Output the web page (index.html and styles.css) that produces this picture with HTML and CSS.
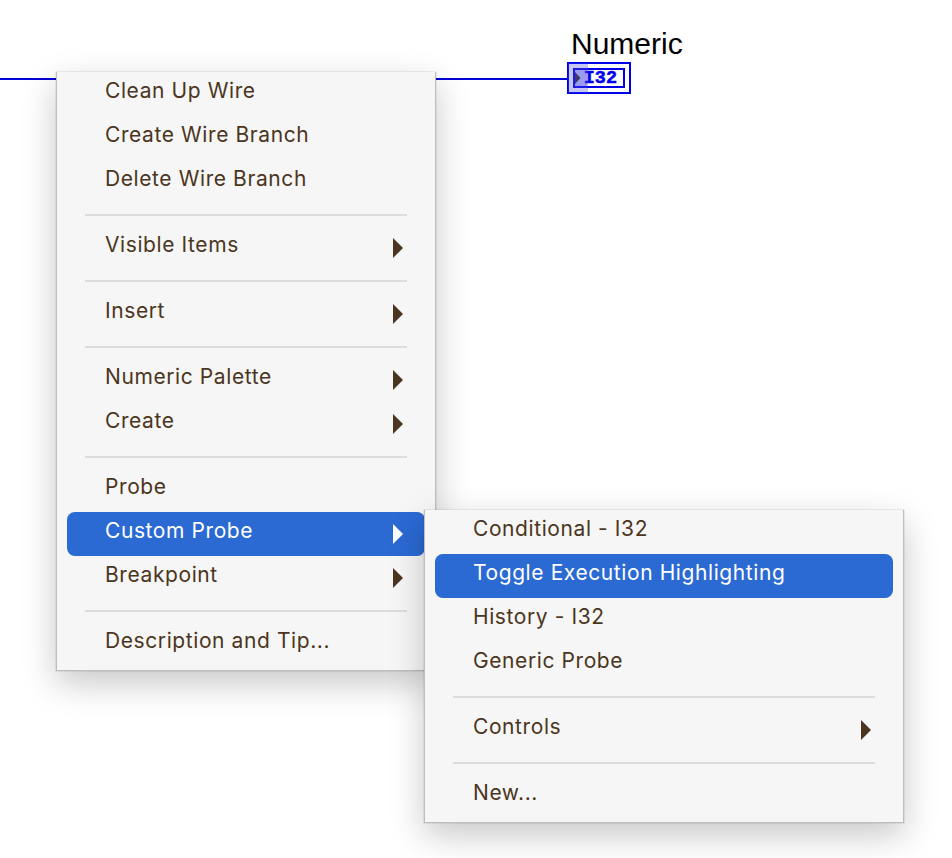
FILE: index.html
```html
<!DOCTYPE html>
<html lang="en">
<head>
<meta charset="utf-8">
<title>Wire context menu</title>
<link rel="stylesheet" href="styles.css">
</head>
<body>
<div class="canvas">
  <div class="wire"></div>
  <div class="label">Numeric</div>
  <div class="terminal">
    <div class="terminal-inner"><span class="terminal-text">I32</span></div>
    <div class="terminal-overlay"></div>
    <div class="terminal-dark"></div>
    <svg class="terminal-arrow" width="6" height="12" viewBox="0 0 6 12"><path d="M0 0 L5.5 6 L0 12 Z" fill="#3f3a66"/></svg>
  </div>

  <div class="menu menu-main">
    <div class="item"><span>Clean Up Wire</span></div>
    <div class="item"><span>Create Wire Branch</span></div>
    <div class="item"><span>Delete Wire Branch</span></div>
    <div class="sep"></div>
    <div class="item"><span>Visible Items</span><i class="arrow"></i></div>
    <div class="sep"></div>
    <div class="item"><span>Insert</span><i class="arrow"></i></div>
    <div class="sep"></div>
    <div class="item"><span>Numeric Palette</span><i class="arrow"></i></div>
    <div class="item"><span>Create</span><i class="arrow"></i></div>
    <div class="sep"></div>
    <div class="item"><span>Probe</span></div>
    <div class="item active"><span>Custom Probe</span><i class="arrow"></i></div>
    <div class="item"><span>Breakpoint</span><i class="arrow"></i></div>
    <div class="sep"></div>
    <div class="item"><span>Description and Tip...</span></div>
  </div>

  <div class="menu menu-sub">
    <div class="item"><span>Conditional - I32</span></div>
    <div class="item active"><span>Toggle Execution Highlighting</span></div>
    <div class="item"><span>History - I32</span></div>
    <div class="item"><span>Generic Probe</span></div>
    <div class="sep"></div>
    <div class="item"><span>Controls</span><i class="arrow"></i></div>
    <div class="sep"></div>
    <div class="item"><span>New...</span></div>
  </div>
</div>
</body>
</html>
```
FILE: styles.css
```css
* { box-sizing: border-box; }
html, body { margin: 0; padding: 0; background: #fff; }
.canvas { position: relative; width: 952px; height: 858px; overflow: hidden; background: #fff; }

.wire { position: absolute; left: 0; top: 78px; width: 568px; height: 2px; background: #0000d8; }
.label {
  position: absolute; left: 571px; top: 27px;
  font: 30px/34px "Liberation Sans", Arial, sans-serif; color: #000;
}
.terminal {
  position: absolute; left: 567px; top: 62px; width: 64px; height: 32px;
  border: 2px solid #0000e6; background: #fff;
}
.terminal-inner {
  position: absolute; left: 4px; top: 4px; width: 52px; height: 20px;
  border: 2px solid #0000e6; display: flex; align-items: center; justify-content: flex-end; padding: 1px 6px 0 0;
}
.terminal-text {
  font: bold 18.5px/16px "Liberation Mono", "Courier New", monospace;
  color: #0000f0; -webkit-text-stroke: .5px #0000f0;
}
.terminal-overlay { position: absolute; left: -1px; top: -1px; width: 20px; height: 30px; background: rgba(70, 70, 230, .3); }
.terminal-dark { position: absolute; left: 4px; top: 4px; width: 14px; height: 20px; background: rgba(50, 50, 220, .3); }
.terminal-arrow { position: absolute; left: 6px; top: 8px; }

.menu {
  position: absolute;
  background: #f6f6f6;
  border: 1px solid #bdbdbd;
  border-width: 0 1px 1px 1px;
  box-shadow: 0 0 1px rgba(0,0,0,.35), 0 12px 32px rgba(0,0,0,.22);
  padding: 0 10px 4px;
  display: flex; flex-direction: column;
  font-family: Inter, "Liberation Sans", sans-serif;
  font-size: 21px;
  letter-spacing: .59px;
  color: #4b3520;
}
.menu-main { left: 56px; top: 72px; width: 380px; height: 599px; }
.menu-sub { left: 424px; top: 510px; width: 480px; height: 313px; }

.item {
  position: relative; height: 44px; flex: none;
  display: flex; align-items: center;
  padding: 0 0 8px 38px;
  border-radius: 8px;
  white-space: nowrap;
}
.item.active { background: #2b69d3; color: #fff; }
.arrow {
  position: absolute; right: 22px; top: 12px;
  width: 0; height: 0;
  border-left: 10px solid #4b3520;
  border-top: 10px solid transparent;
  border-bottom: 10px solid transparent;
}
.active .arrow { border-left-color: #fff; }
.sep { flex: none; height: 22px; display: flex; align-items: center; margin: 0 18px; }
.sep::before { content: ""; display: block; width: 100%; height: 2px; background: #dddddd; }
```
